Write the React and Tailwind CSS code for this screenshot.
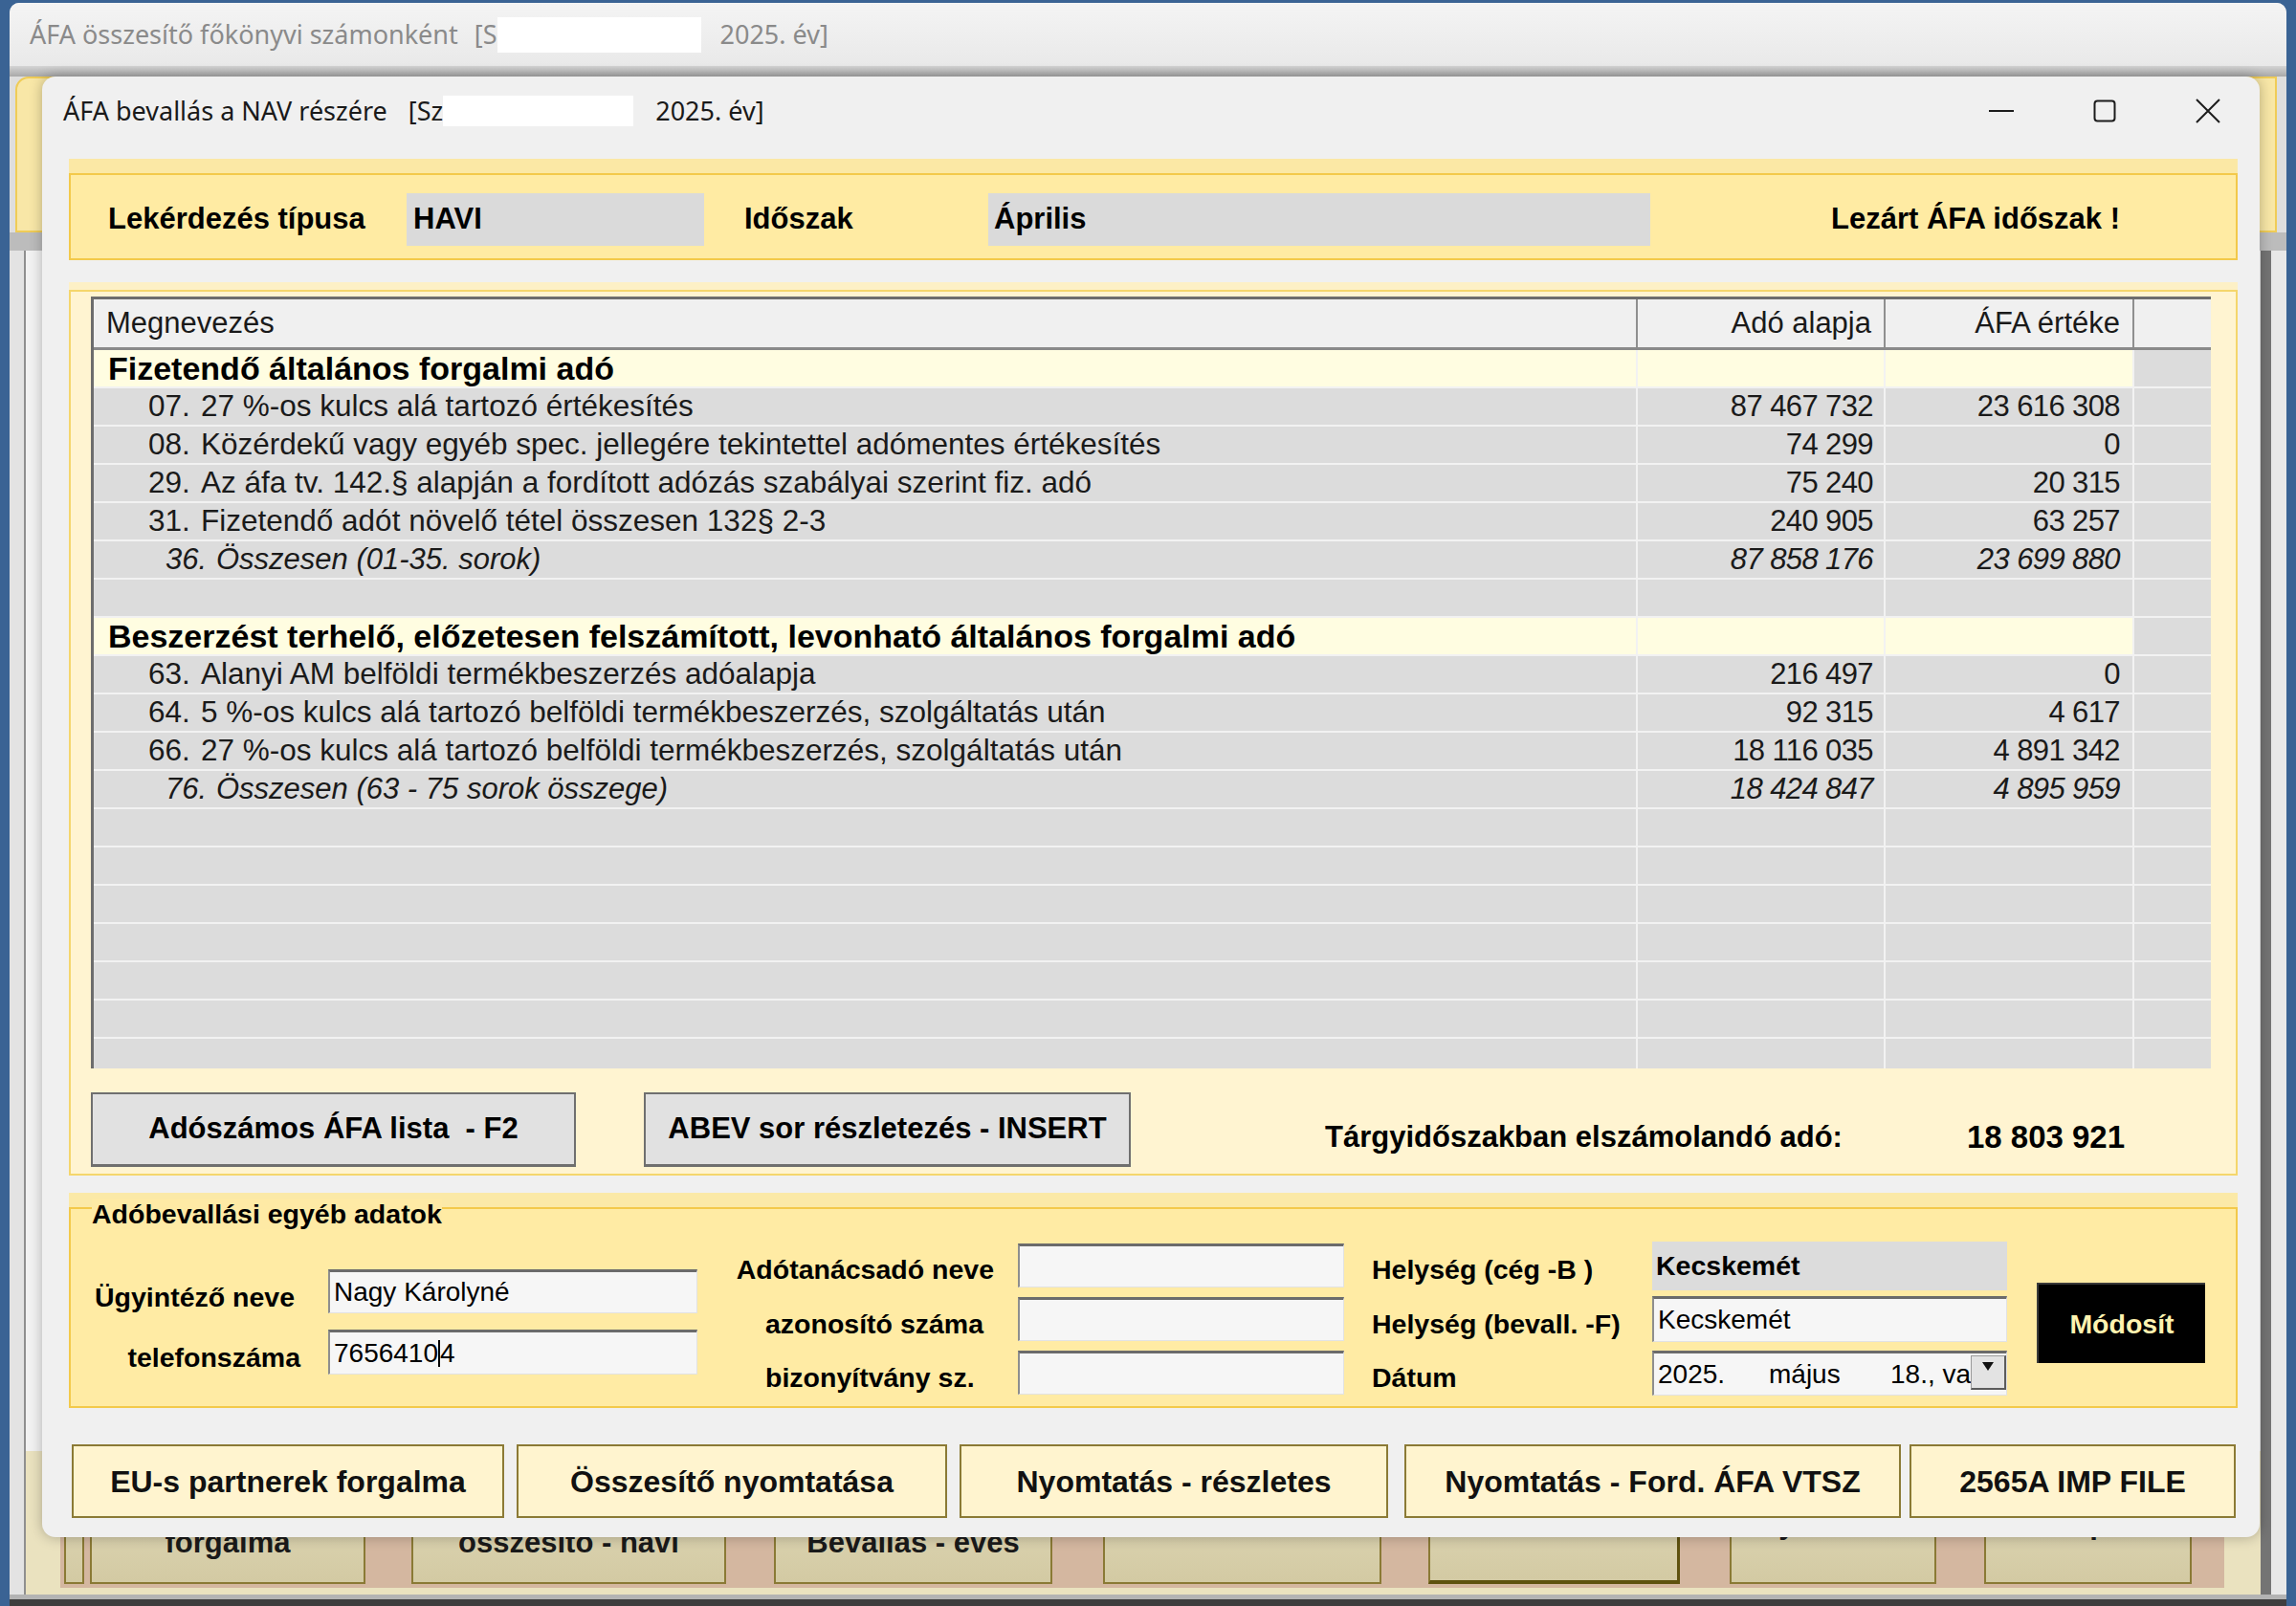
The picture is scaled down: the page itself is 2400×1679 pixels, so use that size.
import React from "react";

const sans = "[font-family:Liberation_Sans,Arial,sans-serif]";
const ui = "[font-family:Noto_Sans,Open_Sans,sans-serif]";

const rows = [
  { type: "section", text: "Fizetendő általános forgalmi adó" },
  { no: "07.", text: "27 %-os kulcs alá tartozó értékesítés", a: "87 467 732", b: "23 616 308" },
  { no: "08.", text: "Közérdekű vagy egyéb spec. jellegére tekintettel adómentes értékesítés", a: "74 299", b: "0" },
  { no: "29.", text: "Az áfa tv. 142.§ alapján a fordított adózás szabályai szerint fiz. adó", a: "75 240", b: "20 315" },
  { no: "31.", text: "Fizetendő adót növelő tétel összesen 132§ 2-3", a: "240 905", b: "63 257" },
  { type: "total", no: "36.", text: "Összesen (01-35. sorok)", a: "87 858 176", b: "23 699 880" },
  { type: "empty" },
  { type: "section", text: "Beszerzést terhelő, előzetesen felszámított, levonható általános forgalmi adó" },
  { no: "63.", text: "Alanyi AM belföldi termékbeszerzés adóalapja", a: "216 497", b: "0" },
  { no: "64.", text: "5 %-os kulcs alá tartozó belföldi termékbeszerzés, szolgáltatás után", a: "92 315", b: "4 617" },
  { no: "66.", text: "27 %-os kulcs alá tartozó belföldi termékbeszerzés, szolgáltatás után", a: "18 116 035", b: "4 891 342" },
  { type: "total", no: "76.", text: "Összesen (63 - 75 sorok összege)", a: "18 424 847", b: "4 895 959" },
  { type: "empty" },
  { type: "empty" },
  { type: "empty" },
  { type: "empty" },
  { type: "empty" },
  { type: "empty" },
  { type: "empty" },
];

function GridRow({ r }) {
  const sec = r.type === "section";
  const cell = sec ? "bg-[#fffde1]" : "bg-[#dcdcdc]";
  const num = "flex items-center justify-end text-[31px] tracking-[-0.6px] text-[#1a1a1a] border-r-2 border-[#f2f2f2] ";
  return (
    <div className="flex h-[40px] shrink-0 border-b-2 border-[#f2f2f2]">
      <div className={"w-[1614px] border-r-2 border-[#f2f2f2] flex items-center whitespace-nowrap overflow-hidden " + cell}>
        {sec && <span className="pl-[15px] text-[34px] font-bold text-black">{r.text}</span>}
        {r.type === "total" && (
          <span className="pl-[75px] text-[31px] italic text-[#1a1a1a]">
            <span className="inline-block w-[53px]">{r.no}</span>
            {r.text}
          </span>
        )}
        {!r.type && (
          <span className="pl-[57px] text-[31.5px] text-[#1a1a1a]">
            <span className="inline-block w-[55px]">{r.no}</span>
            {r.text}
          </span>
        )}
      </div>
      <div className={num + "w-[259px] pr-[11px] " + cell + (r.type === "total" ? " italic" : "")}>{r.a}</div>
      <div className={num + "w-[260px] pr-[13px] " + cell + (r.type === "total" ? " italic" : "")}>{r.b}</div>
      <div className="flex-1 bg-[#dcdcdc]" />
    </div>
  );
}

function Input({ children, className = "" }) {
  return (
    <div
      className={
        "flex items-center overflow-hidden whitespace-nowrap bg-[#f6f6f6] border-t-[3px] border-l-2 border-b border-r border-t-[#6b6b6b] border-l-[#8e8e8e] border-b-[#e2e2e2] border-r-[#e2e2e2] pl-[4px] text-[28px] font-normal text-black " +
        className
      }
    >
      {children}
    </div>
  );
}

function WinControls() {
  return (
    <div className="ml-auto flex h-full">
      <div className="w-[108px] flex items-center justify-center">
        <svg width="26" height="4" viewBox="0 0 26 4">
          <rect x="0" y="1" width="26" height="2" fill="#1c1c1c" />
        </svg>
      </div>
      <div className="w-[108px] flex items-center justify-center">
        <svg width="24" height="24" viewBox="0 0 24 24">
          <rect x="1.5" y="1.5" width="21" height="21" rx="3" fill="none" stroke="#1c1c1c" strokeWidth="2" />
        </svg>
      </div>
      <div className="w-[108px] flex items-center justify-center">
        <svg width="26" height="26" viewBox="0 0 26 26">
          <path d="M1 1 L25 25 M25 1 L1 25" stroke="#1c1c1c" strokeWidth="2" />
        </svg>
      </div>
    </div>
  );
}

function OuterButton({ w, ml, pb, lines, thick }) {
  return (
    <div
      className={
        "h-[150px] flex flex-col justify-end items-center bg-gradient-to-b from-[#e6dfc2] to-[#d3caa3] border-2 border-[#8a7a35] text-[31px] font-bold leading-[36px] text-[#1a1a1a] whitespace-nowrap overflow-hidden " +
        (thick ? "border-b-[4px] border-r-[3px] border-b-[#5f520f] border-r-[#5f520f]" : "")
      }
      style={{ width: w, marginLeft: ml, paddingBottom: pb }}
    >
      {lines.map((l, i) => (
        <span key={i}>{l}</span>
      ))}
    </div>
  );
}

export default function App() {
  return (
    <div className={"relative w-[2400px] h-[1679px] overflow-hidden bg-[#3a6394] " + sans}>
      {/* background window */}
      <div className="absolute left-[10px] top-[3px] w-[2380px] h-[1676px] rounded-t-[10px] overflow-hidden flex flex-col bg-[#e6e6e6]">
        <div className={"h-[66px] shrink-0 flex items-center pl-[21px] bg-gradient-to-b from-[#f4f4f4] to-[#e9e9e9] text-[27px] text-[#8a8a8a] " + ui}>
          <span>ÁFA összesítő főkönyvi számonként</span>
          <span className="ml-[17px]">[S</span>
          <span className="inline-block w-[213px] h-[37px] bg-white" />
          <span className="ml-[20px]">2025. év]</span>
        </div>
        <div className="h-[11px] shrink-0 bg-gradient-to-b from-[#d4d4d4] to-[#a9a9a9]" />
        <div className="h-[163px] shrink-0 pl-[6px] pr-[10px] bg-[#dedede]">
          <div className="h-full rounded-tl-[14px] border-2 border-[#efcc57] bg-[#f8e7a7]" />
        </div>
        <div className="h-[19px] shrink-0 bg-[#bcbcbc]" />
        <div className="flex-1 flex">
          <div className="w-[17px] bg-[#e3e3e3] border-r-2 border-[#8f8f8f]" />
          <div className="flex-1 flex flex-col">
            <div className="flex-1 bg-[#f2f2f2]" />
            <div className="h-[150px] bg-[#eae2bf] pl-[36px] pr-[38px] pb-[7px]">
              <div className="h-full bg-[#d4b7a0] flex items-end pb-[4px]">
                <OuterButton w={21} ml={4} pb={30} lines={["\u2009"]} />
                <OuterButton w={288} ml={6} pb={23} lines={["EU-s partnerek", "forgalma"]} />
                <OuterButton w={329} ml={48} pb={23} lines={["ÁFA", "összesítő - havi"]} />
                <OuterButton w={291} ml={50} pb={23} lines={["ÁFA", "Bevallás - éves"]} />
                <OuterButton w={291} ml={53} pb={60} lines={["Lista"]} />
                <OuterButton w={263} ml={49} pb={60} lines={["Vissza"]} thick />
                <OuterButton w={216} ml={52} pb={43} lines={["Nyomtatás"]} />
                <OuterButton w={217} ml={50} pb={43} lines={["Kilépés"]} />
              </div>
            </div>
          </div>
          <div className="w-[27px] bg-[#e8e8e8] border-l-[11px] border-[#747474]" />
        </div>
        <div className="h-[5px] shrink-0 bg-[#b3b3b3]" />
        <div className="h-[7px] shrink-0 bg-[#3e3e3e]" />
      </div>

      {/* dialog window */}
      <div className="absolute left-[44px] top-[80px] w-[2318px] h-[1527px] rounded-[14px] bg-[#f0f0f0] shadow-[0_0_14px_rgba(0,0,0,0.28)] flex flex-col">
        <div className={"h-[72px] shrink-0 flex items-center pl-[22px] text-[27px] text-[#1a1a1a] " + ui}>
          <span>ÁFA bevallás a NAV részére</span>
          <span className="ml-[22px]">[Sz</span>
          <span className="inline-block w-[199px] h-[32px] bg-white" />
          <span className="ml-[23px]">2025. év]</span>
          <WinControls />
        </div>

        <div className="pl-[28px] pr-[23px] flex flex-col">
          {/* query header */}
          <div className="mt-[14px] h-[106px] bg-[#fbe8a5] pt-[15px]">
            <div className="h-[91px] border-2 border-[#f3c94a] bg-[#ffeba3] flex items-center pt-[6px] text-[31px] font-bold text-black">
              <div className="w-[351px] pl-[39px] whitespace-nowrap">Lekérdezés típusa</div>
              <div className="w-[311px] h-[55px] bg-[#dadada] pl-[7px] flex items-center">HAVI</div>
              <div className="w-[297px] pl-[42px]">Időszak</div>
              <div className="w-[692px] h-[55px] bg-[#dadada] pl-[6px] flex items-center">Április</div>
              <div className="flex-1 text-right pr-[121px] whitespace-nowrap">Lezárt ÁFA időszak !</div>
            </div>
          </div>

          {/* return lines */}
          <div className="mt-[23px] h-[934px] bg-[#fdf0c6] pt-[8px]">
            <div className="h-[926px] border-2 border-[#f5d66c] bg-[#fff4d1] pt-[5px] pl-[21px] flex flex-col">
              <div className="w-[2216px] h-[807px] shrink-0 overflow-hidden border-l-[3px] border-t-[3px] border-[#6d6d6d] flex flex-col bg-[#dcdcdc]">
                <div className="flex h-[53px] shrink-0 bg-[#f0f0f0] border-b-[3px] border-[#8a8a8a] text-[31px] text-[#1a1a1a]">
                  <div className="w-[1614px] pl-[13px] flex items-center border-r-2 border-[#8f8f8f]">Megnevezés</div>
                  <div className="w-[259px] pr-[13px] flex items-center justify-end border-r-2 border-[#8f8f8f]">Adó alapja</div>
                  <div className="w-[260px] pr-[13px] flex items-center justify-end border-r-2 border-[#8f8f8f]">ÁFA értéke</div>
                  <div className="flex-1" />
                </div>
                {rows.map((r, i) => (
                  <GridRow key={i} r={r} />
                ))}
              </div>

              <div className="mt-[25px] flex items-center text-[31px] font-bold text-black">
                <div className="w-[507px] h-[78px] flex items-center justify-center bg-[#e1e1e1] border-2 border-[#6f6f6f] border-b-[3px] whitespace-nowrap">
                  Adószámos ÁFA lista&nbsp; - F2
                </div>
                <div className="ml-[71px] w-[509px] h-[78px] flex items-center justify-center bg-[#e1e1e1] border-2 border-[#6f6f6f] border-b-[3px] whitespace-nowrap">
                  ABEV sor részletezés - INSERT
                </div>
                <div className="ml-[203px] pt-[16px] whitespace-nowrap">Tárgyidőszakban elszámolandó adó:</div>
                <div className="ml-[130px] pt-[16px] text-[33px] whitespace-nowrap">18 803 921</div>
              </div>
            </div>
          </div>

          {/* other return data */}
          <div className="mt-[18px] h-[225px] bg-[#fbe9a7] pt-[15px]">
            <div className="relative h-[210px] border-2 border-[#f3c94a] bg-[#ffeba4] flex text-[28.5px] font-bold text-black">
              <span className="absolute left-[22px] -top-[11px] leading-[32px] bg-[#feeaa5] whitespace-nowrap">
                Adóbevallási egyéb adatok
              </span>

              <div className="w-[655px] pt-[63px] flex flex-col gap-[17px]">
                <div className="flex items-center h-[46px]">
                  <span className="w-[269px] pl-[25px] whitespace-nowrap translate-y-[6px]">Ügyintéző neve</span>
                  <Input className="w-[386px] h-[46px]">Nagy Károlyné</Input>
                </div>
                <div className="flex items-center h-[47px]">
                  <span className="w-[269px] pr-[29px] text-right whitespace-nowrap translate-y-[6px]">telefonszáma</span>
                  <Input className="w-[386px] h-[47px]">
                    7656410
                    <span className="inline-block w-[2px] h-[28px] bg-black" />
                    4
                  </Input>
                </div>
              </div>

              <div className="w-[676px] pt-[36px] flex flex-col gap-[10px]">
                <div className="flex items-center h-[46px]">
                  <span className="w-[335px] pr-[25px] text-right whitespace-nowrap translate-y-[4px]">Adótanácsadó neve</span>
                  <Input className="w-[341px] h-[46px]" />
                </div>
                <div className="flex items-center h-[46px]">
                  <span className="w-[335px] pl-[71px] whitespace-nowrap translate-y-[5px]">azonosító száma</span>
                  <Input className="w-[341px] h-[46px]" />
                </div>
                <div className="flex items-center h-[46px]">
                  <span className="w-[335px] pl-[71px] whitespace-nowrap translate-y-[5px]">bizonyítvány sz.</span>
                  <Input className="w-[341px] h-[46px]" />
                </div>
              </div>

              <div className="w-[693px] pt-[34px] flex flex-col">
                <div className="flex items-center h-[51px]">
                  <span className="w-[322px] pl-[29px] whitespace-nowrap translate-y-[4px]">Helység (cég -B )</span>
                  <div className="w-[371px] h-[51px] bg-[#dcdcdc] pl-[4px] flex items-center">Kecskemét</div>
                </div>
                <div className="mt-[6px] flex items-center h-[48px]">
                  <span className="w-[322px] pl-[29px] whitespace-nowrap translate-y-[5px]">Helység (bevall. -F)</span>
                  <Input className="w-[371px] h-[48px]">Kecskemét</Input>
                </div>
                <div className="mt-[9px] flex items-center h-[47px]">
                  <span className="w-[322px] pl-[29px] whitespace-nowrap translate-y-[5px]">Dátum</span>
                  <Input className="w-[371px] h-[47px] !items-start">
                    <div className="flex-1 h-full flex items-center overflow-hidden">
                      <span className="inline-block w-[116px] shrink-0">2025.</span>
                      <span className="inline-block w-[127px] shrink-0">május</span>
                      <span className="shrink-0">18., va</span>
                    </div>
                    <div className="w-[37px] h-[36px] mt-[2px] shrink-0 bg-[#e3e3e3] border border-[#9a9a9a] border-b-2 border-r-2 border-b-[#5c5c5c] border-r-[#5c5c5c] flex justify-center pt-[6px]">
                      <svg width="12" height="9" viewBox="0 0 12 9">
                        <path d="M0 0 H12 L6 9 Z" fill="#111" />
                      </svg>
                    </div>
                  </Input>
                </div>
              </div>

              <div className="ml-[31px] mt-[77px] w-[176px] h-[84px] bg-black border-t-2 border-l-2 border-[#3a3a3a] flex items-center justify-center text-[#fff3b0]">
                Módosít
              </div>
            </div>
          </div>

          {/* action buttons */}
          <div className="mt-[38px] flex text-[32px] font-bold text-[#111]">
            <div className="ml-[3px] w-[452px] h-[77px] flex items-center justify-center bg-[#fff4cf] border-2 border-[#8b7a35] whitespace-nowrap">EU-s partnerek forgalma</div>
            <div className="ml-[13px] w-[450px] h-[77px] flex items-center justify-center bg-[#fff4cf] border-2 border-[#8b7a35] whitespace-nowrap">Összesítő nyomtatása</div>
            <div className="ml-[13px] w-[448px] h-[77px] flex items-center justify-center bg-[#fff4cf] border-2 border-[#8b7a35] whitespace-nowrap">Nyomtatás - részletes</div>
            <div className="ml-[17px] w-[519px] h-[77px] flex items-center justify-center bg-[#fff4cf] border-2 border-[#8b7a35] whitespace-nowrap">Nyomtatás - Ford. ÁFA VTSZ</div>
            <div className="ml-[9px] w-[341px] h-[77px] flex items-center justify-center bg-[#fff4cf] border-2 border-[#8b7a35] whitespace-nowrap">2565A IMP FILE</div>
          </div>
        </div>
      </div>
    </div>
  );
}
